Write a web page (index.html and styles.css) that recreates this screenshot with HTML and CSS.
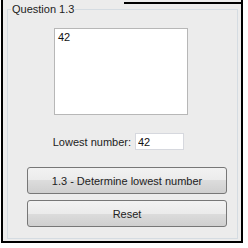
FILE: index.html
```html
<!DOCTYPE html>
<html lang="en">
<head>
    <meta charset="UTF-8">
    <meta name="viewport" content="width=device-width, initial-scale=1.0">
    <title>Question 1.3</title>
    <link rel="stylesheet" href="styles.css">
</head>
<body>
    <div class="window">
        <fieldset class="group">
            <legend>Question 1.3</legend>
            <textarea class="output">42</textarea>
            <div class="row">
                <label for="lowest">Lowest number:</label>
                <input id="lowest" class="small-input" type="text" value="42">
            </div>
            <button class="btn btn-first">1.3 - Determine lowest number</button>
            <button class="btn">Reset</button>
        </fieldset>
    </div>
</body>
</html>
```

FILE: styles.css
```css
* {
    box-sizing: border-box;
    font-family: 'Liberation Sans', Arial, sans-serif;
}

body {
    margin: 0;
    background: #ffffff;
}

.window {
    position: relative;
    margin-left: 1px;
    width: 242px;
    height: 243px;
    padding-top: 3px;
    background: #ececec;
    border: 2px solid #000;
    border-top: 0;
}

/* top edge of the window frame, only on the right */
.window::before {
    content: '';
    position: absolute;
    top: 2px;
    left: 121px;
    right: -2px;
    height: 2px;
    background: #000;
}

.group {
    margin: 0 0 0 4px;
    padding: 0;
    width: 231px;
    height: 236px;
    border: 1px solid #d5dce2;
    display: flex;
    flex-direction: column;
    align-items: flex-start;
}

.group legend {
    margin-left: 3px;
    padding: 0 1px;
    font-size: 11px;
    line-height: 13px;
    color: #222;
}

.output {
    margin: 12px 0 0 46px;
    width: 134px;
    height: 87px;
    padding: 2px 3px;
    border: 1px solid #b7b7b7;
    background: #fff;
    resize: none;
    font-size: 11px;
    line-height: 13px;
    color: #111;
}

.row {
    margin-top: 18px;
    width: 176px;
    height: 17px;
    display: flex;
    align-items: center;
    justify-content: flex-end;
    gap: 4px;
}

.row label {
    font-size: 11px;
    color: #222;
}

.small-input {
    width: 49px;
    height: 17px;
    padding: 0 2px;
    border: 1px solid #d6d8de;
    background: #fff;
    font-size: 11px;
    color: #111;
}

.btn {
    margin: 6px 0 0 19px;
    width: 200px;
    height: 27px;
    border: 1px solid #777;
    border-radius: 3px;
    background: linear-gradient(#f2f2f2 0%, #ebebeb 50%, #dcdcdc 50%, #cfcfcf 100%);
    font-size: 11px;
    color: #222;
}

.btn-first {
    margin-top: 17px;
}
```
